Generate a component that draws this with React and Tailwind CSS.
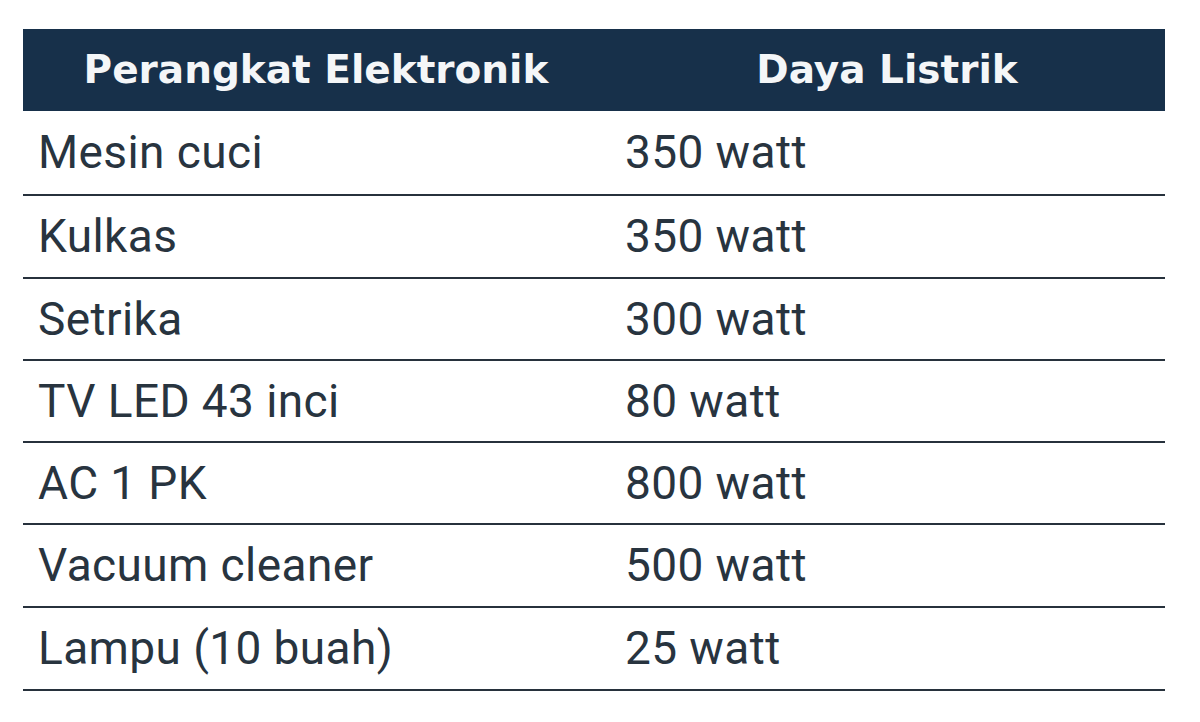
import React from 'react'

const rows = [
  ['Mesin cuci', '350 watt', 'h-[85px]'],
  ['Kulkas', '350 watt', 'h-[83px]'],
  ['Setrika', '300 watt', 'h-[82px]'],
  ['TV LED 43 inci', '80 watt', 'h-[82px]'],
  ['AC 1 PK', '800 watt', 'h-[82px]'],
  ['Vacuum cleaner', '500 watt', 'h-[83px]'],
  ['Lampu (10 buah)', '25 watt', 'h-[83px]'],
]

export default function App() {
  return (
    <div className="w-[1200px] h-[722px] bg-white pt-[29px] pl-[23px]" style={{ fontFamily: 'Roboto, "DejaVu Sans", sans-serif' }}>
      <div className="w-[1142px]">
        {/* Header */}
        <div className="flex h-[82px] bg-[#17304a] text-[#f4f6f8] font-bold text-[39px] items-center font-['DejaVu_Sans',sans-serif]">
          <div className="w-[586px] text-center">Perangkat Elektronik</div>
          <div className="flex-1 text-center">Daya Listrik</div>
        </div>

        {rows.map(([name, power, h]) => (
          <div key={name} className={`flex ${h} items-center border-b-2 border-[#27313c] text-[#28343f] text-[46px] tracking-[0.4px]`}>
            <div className="w-[586px] pl-[15px]">{name}</div>
            <div className="flex-1 pl-[16px]">{power}</div>
          </div>
        ))}
      </div>
    </div>
  )
}
